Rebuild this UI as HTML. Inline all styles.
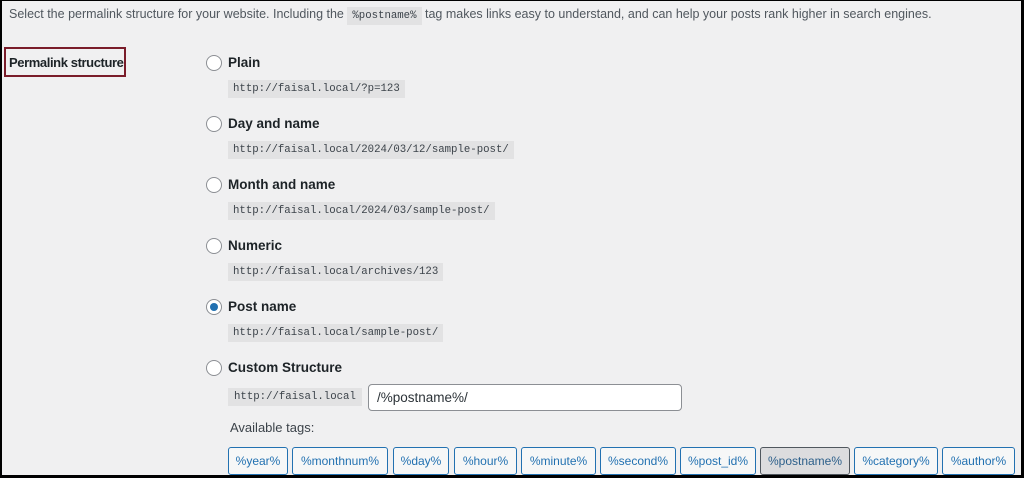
<!DOCTYPE html>
<html><head><meta charset="utf-8"><style>
*{box-sizing:border-box;margin:0;padding:0}
body{width:1024px;height:478px;background:#000;font-family:"Liberation Sans",sans-serif;color:#3c434a;overflow:hidden;position:relative}
.pg{position:absolute;left:2px;top:1px;width:1019px;height:474px;background:#f0f0f1}
.a{position:absolute;white-space:nowrap}
.desc{left:9px;top:7px;font-size:12.5px;color:#50575e}
code{font-family:"Liberation Mono",monospace;background:#e2e2e3;font-size:10.7px;padding:3px 5px;color:#3c434a}
.red{left:4px;top:47px;width:122px;height:30px;border:2px solid #7a1c2a;font-size:13px;font-weight:bold;color:#1d2327;padding:6px 3px;letter-spacing:-0.4px}
.r{width:16px;height:16px;border:1px solid #8c8f94;border-radius:50%;background:#fff}
.r.on::after{content:"";position:absolute;left:3px;top:3px;width:8px;height:8px;border-radius:50%;background:#2271b1}
.lb{font-size:13.5px;font-weight:bold;color:#1d2327}
.cd{font-family:"Liberation Mono",monospace;background:#e2e2e3;font-size:10.7px;padding:0 5px;height:18px;line-height:18px;color:#3c434a}
.in{left:368px;top:384px;width:314px;height:27px;background:#fff;border:1px solid #8c8f94;border-radius:4px;font-size:13.5px;padding:5px 8px;color:#2c3338}
.bt{top:447px;height:28px;border:1px solid #2271b1;border-radius:3px;background:#f6f7f7;color:#2271b1;font-size:12px;text-align:center;line-height:26px}
.bt.on{background:#dcdcde;border-color:#50575e;color:#2c5f8a}
</style></head><body><div class="pg"></div>
<div class="a desc">Select the permalink structure for your website. Including the <code>%postname%</code> tag makes links easy to understand, and can help your posts rank higher in search engines.</div>
<div class="a red">Permalink structure</div>

<div class="a r" style="left:206px;top:55px"></div><div class="a lb" style="left:228px;top:55px">Plain</div>
<div class="a cd" style="left:228px;top:80px">http://faisal.local/?p=123</div>
<div class="a r" style="left:206px;top:116px"></div><div class="a lb" style="left:228px;top:116px">Day and name</div>
<div class="a cd" style="left:228px;top:141px">http://faisal.local/2024/03/12/sample-post/</div>
<div class="a r" style="left:206px;top:177px"></div><div class="a lb" style="left:228px;top:177px">Month and name</div>
<div class="a cd" style="left:228px;top:202px">http://faisal.local/2024/03/sample-post/</div>
<div class="a r" style="left:206px;top:238px"></div><div class="a lb" style="left:228px;top:238px">Numeric</div>
<div class="a cd" style="left:228px;top:263px">http://faisal.local/archives/123</div>
<div class="a r on" style="left:206px;top:299px"></div><div class="a lb" style="left:228px;top:299px">Post name</div>
<div class="a cd" style="left:228px;top:324px">http://faisal.local/sample-post/</div>
<div class="a r" style="left:206px;top:360px"></div><div class="a lb" style="left:228px;top:360px">Custom Structure</div>
<div class="a cd" style="left:228px;top:388px;padding:0 6px">http://faisal.local</div>
<div class="a in">/%postname%/</div>
<div class="a" style="left:230px;top:420px;font-size:13px">Available tags:</div>
<div class="a bt" style="left:228px;width:60px">%year%</div>
<div class="a bt" style="left:292px;width:96px">%monthnum%</div>
<div class="a bt" style="left:393px;width:56px">%day%</div>
<div class="a bt" style="left:454px;width:63px">%hour%</div>
<div class="a bt" style="left:521px;width:75px">%minute%</div>
<div class="a bt" style="left:600px;width:76px">%second%</div>
<div class="a bt" style="left:680px;width:76px">%post_id%</div>
<div class="a bt on" style="left:760px;width:90px">%postname%</div>
<div class="a bt" style="left:854px;width:84px">%category%</div>
<div class="a bt" style="left:942px;width:73px">%author%</div>
</body></html>
